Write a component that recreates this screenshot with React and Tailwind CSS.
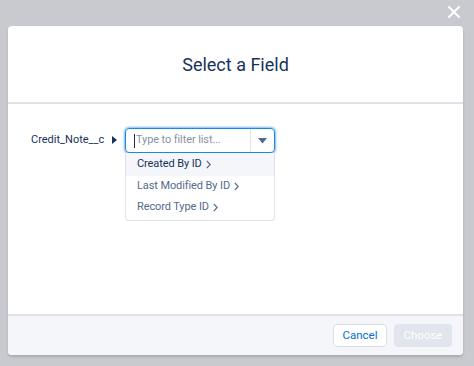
import React from "react";

export default function App() {
  const font = { fontFamily: 'Roboto, "Open Sans", sans-serif' };
  return (
    <div className="w-[474px] h-[366px] bg-[#c9cacf] relative overflow-hidden" style={font}>
      <button className="absolute right-[12px] top-[4px] w-[16px] h-[16px] flex items-center justify-center">
        <svg width="14" height="14" viewBox="0 0 14 14">
          <path d="M2 2 L12 12 M12 2 L2 12" stroke="#ffffff" strokeWidth="2" strokeLinecap="round" />
        </svg>
      </button>
      <div className="pt-[26px] pl-[8px] pr-[11px]">
        <div className="bg-white rounded-[4px] h-[329px] flex flex-col shadow-[0_2px_3px_rgba(0,0,0,0.16)]">
          <div className="h-[78px] border-b-2 border-[#dfe2e8] flex items-center justify-center">
            <h2 className="text-[18px] text-[#16325c]">Select a Field</h2>
          </div>
          <div className="flex-1 pt-[24px] pl-[23px] flex items-start">
            <div className="flex items-center h-[24px] text-[11px] text-[#16325c] w-[86px]">
              <span>Credit_Note__c</span>
              <svg className="ml-auto" width="5" height="8" viewBox="0 0 5 8">
                <path d="M0 0 L5 4 L0 8 Z" fill="#16325c" />
              </svg>
            </div>
            <div className="ml-[8px] w-[150px]">
              <div className="h-[25px] border border-[#1589ee] rounded-[4px] flex shadow-[0_0_3px_#0070d2]">
                <div className="flex-1 flex items-center pl-[8px] text-[11px] text-[#8893a3] tracking-[-0.1px]">
                  <span className="w-px h-[14px] bg-[#16325c] mr-px"></span>
                  <span>Type to filter list...</span>
                </div>
                <div className="w-[24px] border-l border-[#dfe2e8] flex items-center justify-center">
                  <svg width="9" height="6" viewBox="0 0 9 6">
                    <path d="M0 0 L9 0 L4.5 5.5 Z" fill="#54698d" />
                  </svg>
                </div>
              </div>
              <div className="border border-[#dfe2e8] border-t-0 rounded-b-[4px] bg-white text-[11px] text-[#54698d] tracking-[-0.1px] pb-[2px]">
                <div className="h-[23px] bg-[#f4f6f9] flex items-center pl-[11px] text-[#16325c]">Created By ID <Chev /></div>
                <div className="h-[21px] flex items-center pl-[11px]">Last Modified By ID <Chev /></div>
                <div className="h-[21px] flex items-center pl-[11px]">Record Type ID <Chev /></div>
              </div>
            </div>
          </div>
          <div className="h-[41px] bg-[#f4f6f9] border-t-2 border-[#dfe2e8] rounded-b-[4px] flex items-center justify-end pr-[11px] gap-[7px]">
            <button className="h-[23px] w-[54px] bg-white border border-[#d8dde6] rounded-[4px] text-[11.5px] text-[#0070d2]">Cancel</button>
            <button className="h-[23px] w-[58px] bg-[#e0e5ee] rounded-[4px] text-[11.5px] text-white">Choose</button>
          </div>
        </div>
      </div>
    </div>
  );
}

function Chev() {
  return (
    <svg className="ml-[4px]" width="5" height="9" viewBox="0 0 5 9">
      <path d="M0.8 0.8 L4.2 4.5 L0.8 8.2" stroke="#54698d" strokeWidth="1.2" fill="none" />
    </svg>
  );
}
